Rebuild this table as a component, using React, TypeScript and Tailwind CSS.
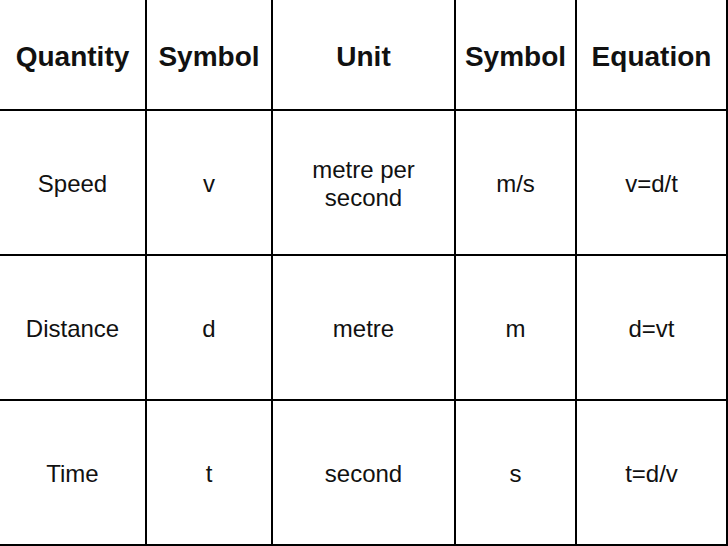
const HEAD = ["Quantity", "Symbol", "Unit", "Symbol", "Equation"];

const ROWS = [
  ["Speed", "v", "metre per second", "m/s", "v=d/t"],
  ["Distance", "d", "metre", "m", "d=vt"],
  ["Time", "t", "second", "s", "t=d/v"],
];

function Cell({ children, bold }: { children: React.ReactNode; bold?: boolean }) {
  return (
    <div
      className={
        "flex items-center justify-center border-r-2 border-b-2 border-black px-3 text-center text-[#111] " +
        (bold ? "pt-[5px] text-[28px] font-bold" : "pt-[2px] text-[24px] leading-[28px]")
      }
    >
      {children}
    </div>
  );
}

export default function App() {
  return (
    <div
      className="h-[546px] w-[728px] overflow-hidden bg-white"
      style={{ fontFamily: '"Liberation Sans", Arial, sans-serif' }}
    >
      <div className="grid grid-cols-[147px_126px_183px_121px_151px] grid-rows-[111px_145px_145px_145px]">
        {HEAD.map((h, i) => (
          <Cell key={i} bold>
            {h}
          </Cell>
        ))}
        {ROWS.map((row, r) =>
          row.map((v, c) => <Cell key={r + "-" + c}>{v}</Cell>),
        )}
      </div>
    </div>
  );
}
